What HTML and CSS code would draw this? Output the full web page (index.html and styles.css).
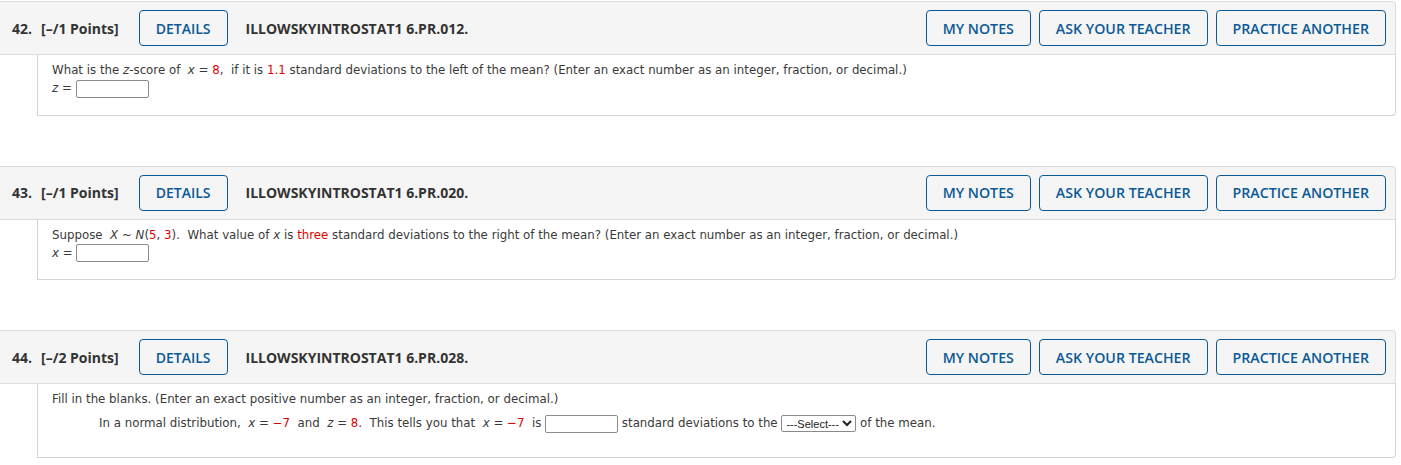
FILE: index.html
```html
<!DOCTYPE html>
<html lang="en">
<head>
  <meta charset="UTF-8">
  <title>Assignment</title>
  <link rel="stylesheet" href="styles.css">
</head>
<body>
  <div class="question">
    <div class="q-header">
      <span class="q-num">42.</span>
      <span class="q-points">[&ndash;/1 Points]</span>
      <button class="btn details">DETAILS</button>
      <span class="q-code">ILLOWSKYINTROSTAT1 6.PR.012.</span>
      <div class="q-actions">
        <button class="btn">MY NOTES</button>
        <button class="btn">ASK YOUR TEACHER</button>
        <button class="btn">PRACTICE ANOTHER</button>
      </div>
    </div>
    <div class="q-body">
      <div class="line">What is the <i>z</i>-score of &nbsp;<i>x</i> = <span class="red">8</span>, &nbsp;if it is <span class="red">1.1</span> standard deviations to the left of the mean? (Enter an exact number as an integer, fraction, or decimal.)</div>
      <div class="line"><i>z</i> = <input class="answer" type="text"></div>
    </div>
  </div>

  <div class="question">
    <div class="q-header">
      <span class="q-num">43.</span>
      <span class="q-points">[&ndash;/1 Points]</span>
      <button class="btn details">DETAILS</button>
      <span class="q-code">ILLOWSKYINTROSTAT1 6.PR.020.</span>
      <div class="q-actions">
        <button class="btn">MY NOTES</button>
        <button class="btn">ASK YOUR TEACHER</button>
        <button class="btn">PRACTICE ANOTHER</button>
      </div>
    </div>
    <div class="q-body">
      <div class="line">Suppose &nbsp;<i>X</i> ~ <i>N</i>(<span class="red">5</span>, <span class="red">3</span>). &nbsp;What value of <i>x</i> is <span class="red">three</span> standard deviations to the right of the mean? (Enter an exact number as an integer, fraction, or decimal.)</div>
      <div class="line"><i>x</i> = <input class="answer" type="text"></div>
    </div>
  </div>

  <div class="question">
    <div class="q-header">
      <span class="q-num">44.</span>
      <span class="q-points">[&ndash;/2 Points]</span>
      <button class="btn details">DETAILS</button>
      <span class="q-code">ILLOWSKYINTROSTAT1 6.PR.028.</span>
      <div class="q-actions">
        <button class="btn">MY NOTES</button>
        <button class="btn">ASK YOUR TEACHER</button>
        <button class="btn">PRACTICE ANOTHER</button>
      </div>
    </div>
    <div class="q-body tall">
      <div class="line">Fill in the blanks. (Enter an exact positive number as an integer, fraction, or decimal.)</div>
      <div class="line indent">In a normal distribution, &nbsp;<i>x</i> = <span class="red">&minus;7</span> &nbsp;and &nbsp;<i>z</i> = <span class="red">8</span>. &nbsp;This tells you that &nbsp;<i>x</i> = <span class="red">&minus;7</span> &nbsp;is <input class="answer" type="text"> standard deviations to the <select class="pick"><option>---Select---</option></select> of the mean.</div>
    </div>
  </div>
</body>
</html>
```

FILE: styles.css
```css
body {
  margin: 0;
  padding-top: 1px;
  background: #fff;
  font-family: "DejaVu Sans", Verdana, sans-serif;
}

.question {
  margin-right: 5px;
  margin-bottom: 50px;
}

.question:last-child {
  margin-bottom: 0;
}

.q-header {
  display: flex;
  align-items: center;
  height: 36px;
  padding: 8px 9px 8px 12px;
  background: #f5f5f5;
  border: 1px solid #dcdcdc;
  border-left: none;
  border-top-right-radius: 4px;
  font-family: "Open Sans", sans-serif;
  font-size: 14px;
  font-weight: 700;
  color: #333;
}

.q-num {
  margin-right: 9px;
}

.q-points {
  margin-right: 20px;
}

.q-code {
  margin-left: 18px;
}

.q-actions {
  margin-left: auto;
  display: flex;
  gap: 8px;
}

.btn {
  height: 36px;
  padding: 0 16px;
  background: #fff0;
  border: 1px solid #0b5a96;
  border-radius: 4px;
  color: #0b5a96;
  font-family: "Open Sans", sans-serif;
  font-size: 14px;
  font-weight: 600;
  cursor: pointer;
}

.q-actions .btn {
  font-size: 14.2px;
}

.q-body {
  margin-left: 37px;
  padding: 6px 14px 17px;
  border: 1px solid #d4d4d4;
  border-top: none;
  border-bottom-right-radius: 4px;
  font-size: 11.8px;
  color: #3a3a3a;
}

.q-body.tall {
  padding-bottom: 24px;
}

.line {
  line-height: 18px;
}

.indent {
  margin-top: 6px;
  padding-left: 47px;
}

.red {
  color: #e00000;
}

.answer {
  width: 69px;
  height: 14px;
  padding: 1px;
  margin: 0;
  border: 1px solid #8a8a8a;
  border-radius: 2px;
  vertical-align: middle;
  font-size: 11px;
}

.pick {
  height: 17px;
  padding: 0;
  margin: 0;
  border: 1px solid #8a8a8a;
  border-radius: 2px;
  background: #fff;
  color: #222;
  font-family: "Liberation Sans", Arial, sans-serif;
  font-size: 11px;
  vertical-align: middle;
}
```
